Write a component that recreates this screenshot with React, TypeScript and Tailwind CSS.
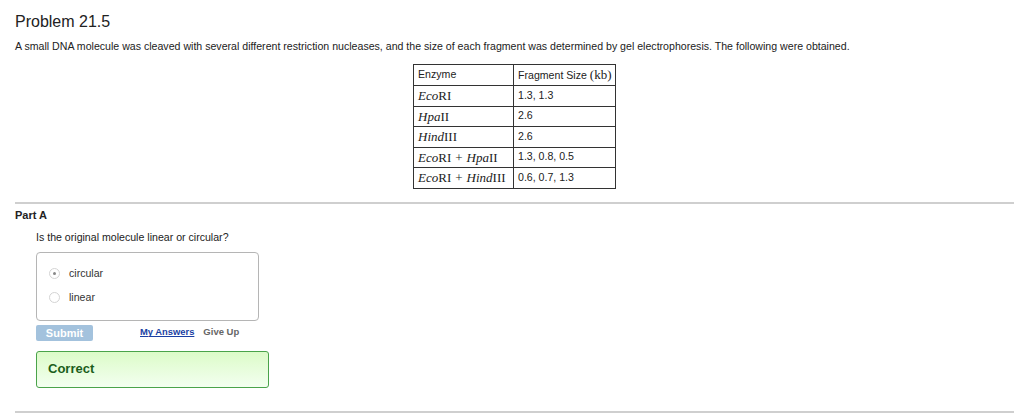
import React from 'react';

const sans = { fontFamily: '"Liberation Sans", Arial, sans-serif' };

function M({ it, rm }: { it: string; rm: string }) {
  return (
    <span>
      <i>{it}</i>
      {rm}
    </span>
  );
}

const Plus = () => <span className="mx-[4px]">+</span>;

const rows: { enzyme: React.ReactNode; size: string }[] = [
  { enzyme: <M it="Eco" rm="RI" />, size: '1.3, 1.3' },
  { enzyme: <M it="Hpa" rm="II" />, size: '2.6' },
  { enzyme: <M it="Hind" rm="III" />, size: '2.6' },
  {
    enzyme: (
      <>
        <M it="Eco" rm="RI" />
        <Plus />
        <M it="Hpa" rm="II" />
      </>
    ),
    size: '1.3, 0.8, 0.5',
  },
  {
    enzyme: (
      <>
        <M it="Eco" rm="RI" />
        <Plus />
        <M it="Hind" rm="III" />
      </>
    ),
    size: '0.6, 0.7, 1.3',
  },
];

function Radio({ checked, label }: { checked?: boolean; label: string }) {
  return (
    <div className="flex items-center h-[14px]">
      <span className="ml-[12px] w-[11px] h-[11px] rounded-full border border-[#d4d4d4] bg-white flex items-center justify-center">
        {checked && <span className="w-[3px] h-[3px] rounded-full bg-[#888]" />}
      </span>
      <span className="ml-[9px] text-[10.6px] text-[#333]">{label}</span>
    </div>
  );
}

export default function App() {
  const serif = { fontFamily: '"Liberation Serif", "Times New Roman", serif' };
  return (
    <div className="w-[1024px] h-[416px] bg-white text-[#222] pl-[15px] pr-[10px] overflow-hidden" style={sans}>
      <h1 className="pt-[12px] text-[16px] leading-[20px] text-[#222]">Problem 21.5</h1>
      <p className="mt-[7px] text-[10.6px] leading-[14px] text-[#222]">
        A small DNA molecule was cleaved with several different restriction nucleases, and the size of each fragment was
        determined by gel electrophoresis. The following were obtained.
      </p>

      <div className="mt-[11px] flex justify-center">
        <table className="border-collapse border border-[#333] text-[10.6px] whitespace-nowrap">
          <tbody>
            <tr className="h-[21px]">
              <td className="w-[100px] border border-[#333] pl-[4px]">Enzyme</td>
              <td className="w-[102px] border border-[#333] pl-[4px] pr-[2px]">
                Fragment Size <span style={serif} className="text-[13px]">(kb)</span>
              </td>
            </tr>
            {rows.map((r, i) => (
              <tr key={i} className="h-[20px]">
                <td className="border border-[#333] pl-[4px] pr-[1px] text-[13px]" style={serif}>
                  {r.enzyme}
                </td>
                <td className="border border-[#333] pl-[4px]">{r.size}</td>
              </tr>
            ))}
          </tbody>
        </table>
      </div>

      <div className="mt-[13px] h-[2px] w-[999px] bg-[#cfcfcf]" />

      <h2 className="mt-[4px] text-[11px] leading-[14px] font-bold text-[#222]">Part A</h2>

      <div className="ml-[21px]">
        <p className="mt-[8px] text-[10.6px] leading-[14px] text-[#222]">Is the original molecule linear or circular?</p>

        <div className="mt-[8px] w-[223px] h-[69px] rounded-[4px] border border-[#b5b5b5] pt-[14px] flex flex-col gap-[10px]">
          <Radio checked label="circular" />
          <Radio label="linear" />
        </div>

        <div className="mt-[4px] flex items-center h-[16px]">
          <button className="w-[57px] h-[16px] rounded-[2px] bg-[#a3c2dd] text-white text-[11px] font-bold leading-[16px]">
            Submit
          </button>
          <a className="ml-[47px] text-[9.4px] font-bold text-[#1a3fa3] underline">My Answers</a>
          <span className="ml-[9px] text-[9.5px] font-bold text-[#666]">Give Up</span>
        </div>

        <div className="mt-[10px] w-[233px] h-[37px] rounded-[3px] border border-[#4aa34a] bg-gradient-to-b from-[#dcfbc8] to-[#f3fff0] flex items-center pl-[11px]">
          <span className="text-[13px] font-bold text-[#1b5e1b]">Correct</span>
        </div>
      </div>

      <div className="mt-[23px] h-[2px] w-[999px] bg-[#cfcfcf]" />
    </div>
  );
}
